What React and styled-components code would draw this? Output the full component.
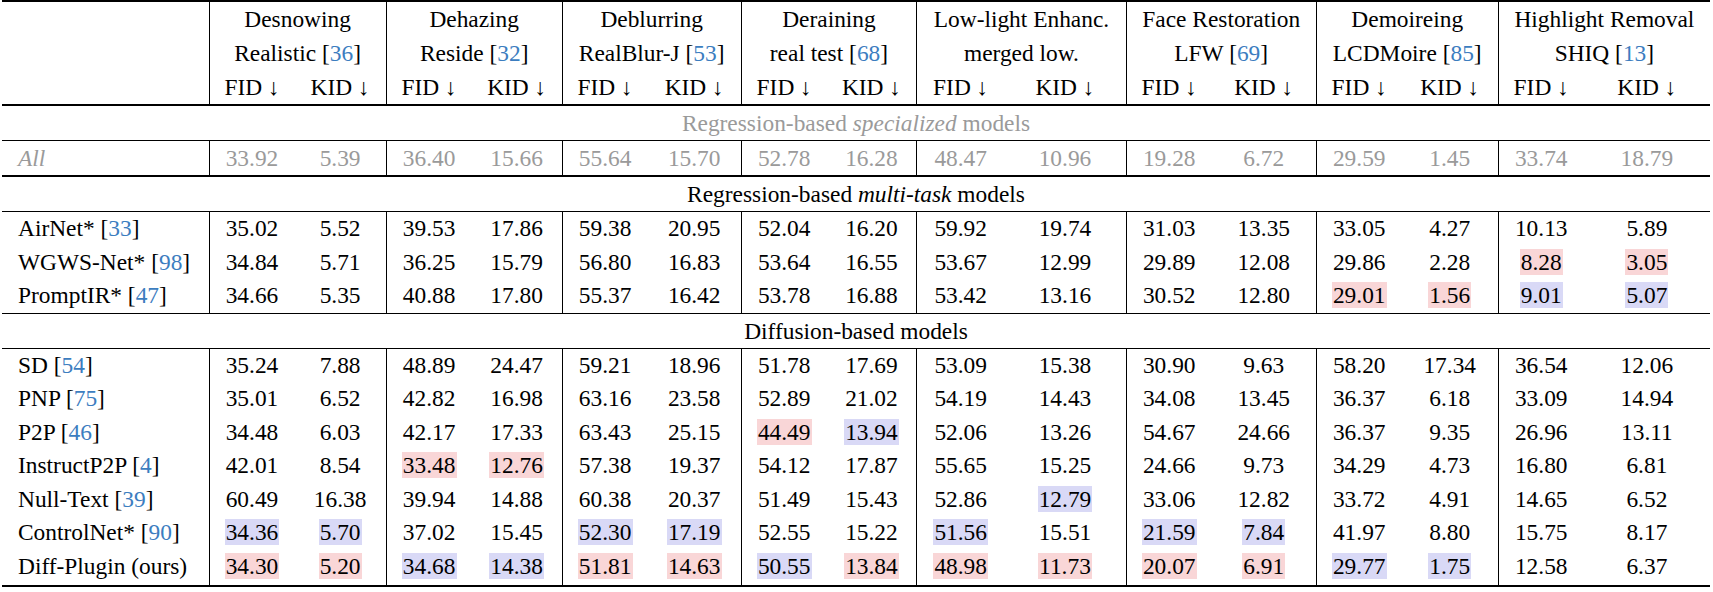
import React from "react"
import styled, { createGlobalStyle } from "styled-components"

const groups = [
	{ task: "Desnowing", set: "Realistic", cite: 36, fid: 86, kid: 91.2 },
	{ task: "Dehazing", set: "Reside", cite: 32, fid: 86, kid: 90 },
	{ task: "Deblurring", set: "RealBlur-J", cite: 53, fid: 86, kid: 93 },
	{ task: "Deraining", set: "real test", cite: 68, fid: 86, kid: 89.5 },
	{ task: "Low-light Enhanc.", set: "merged low.", fid: 88, kid: 121.5 },
	{ task: "Face Restoration", set: "LFW", cite: 69, fid: 86, kid: 104 },
	{ task: "Demoireing", set: "LCDMoire", cite: 85, fid: 86, kid: 96 },
	{ task: "Highlight Removal", set: "SHIQ", cite: 13, fid: 86, kid: 126.3 },
]

// suffix r = best (pink), b = second (blue)
const multiTask = [
	["AirNet*", 33, "35.02 5.52 39.53 17.86 59.38 20.95 52.04 16.20 59.92 19.74 31.03 13.35 33.05 4.27 10.13 5.89"],
	["WGWS-Net*", 98, "34.84 5.71 36.25 15.79 56.80 16.83 53.64 16.55 53.67 12.99 29.89 12.08 29.86 2.28 8.28r 3.05r"],
	["PromptIR*", 47, "34.66 5.35 40.88 17.80 55.37 16.42 53.78 16.88 53.42 13.16 30.52 12.80 29.01r 1.56r 9.01b 5.07b"],
]

const diffusion = [
	["SD", 54, "35.24 7.88 48.89 24.47 59.21 18.96 51.78 17.69 53.09 15.38 30.90 9.63 58.20 17.34 36.54 12.06"],
	["PNP", 75, "35.01 6.52 42.82 16.98 63.16 23.58 52.89 21.02 54.19 14.43 34.08 13.45 36.37 6.18 33.09 14.94"],
	["P2P", 46, "34.48 6.03 42.17 17.33 63.43 25.15 44.49r 13.94b 52.06 13.26 54.67 24.66 36.37 9.35 26.96 13.11"],
	["InstructP2P", 4, "42.01 8.54 33.48r 12.76r 57.38 19.37 54.12 17.87 55.65 15.25 24.66 9.73 34.29 4.73 16.80 6.81"],
	["Null-Text", 39, "60.49 16.38 39.94 14.88 60.38 20.37 51.49 15.43 52.86 12.79b 33.06 12.82 33.72 4.91 14.65 6.52"],
	["ControlNet*", 90, "34.36b 5.70b 37.02 15.45 52.30b 17.19b 52.55 15.22 51.56b 15.51 21.59b 7.84b 41.97 8.80 15.75 8.17"],
	["Diff-Plugin (ours)", null, "34.30r 5.20r 34.68b 14.38b 51.81r 14.63r 50.55b 13.84r 48.98r 11.73r 20.07r 6.91r 29.77b 1.75b 12.58 6.37"],
]

const specialized = "33.92 5.39 36.40 15.66 55.64 15.70 52.78 16.28 48.47 10.96 19.28 6.72 29.59 1.45 33.74 18.79"

const serif = `"Liberation Serif", "Times New Roman", serif`

function Values({ list, muted }) {
	return list.split(" ").map((raw, i) => {
		const tone = raw.match(/[rb]$/) ? raw.slice(-1) : null
		const value = tone ? raw.slice(0, -1) : raw
		return (
			<NumCell key={i} $sep={i % 2 === 0} $muted={muted}>
				{tone ? <Mark $tone={tone}>{value}</Mark> : value}
			</NumCell>
		)
	})
}

function ModelRows({ rows }) {
	return rows.map(([name, cite, list], i) => (
		<Row key={name} $h={33.5} $pad={i === rows.length - 1 && rows.length > 5 ? 2 : 0}>
			<LabelCell>
				{name}
				{cite !== null && (
					<>
						{" "}[<Cite>{cite}</Cite>]
					</>
				)}
			</LabelCell>
			<Values list={list} />
		</Row>
	))
}

function App() {
	return (
		<>
			<GlobalStyle />
			<Table>
				<colgroup>
					<Col $w={206.5} />
					{groups.map((g) => (
						<React.Fragment key={g.task}>
							<Col $w={g.fid} />
							<Col $w={g.kid} />
						</React.Fragment>
					))}
				</colgroup>
				<thead>
					<Row $top={2} $h={34}>
						<LabelHead rowSpan={3} />
						{groups.map((g) => (
							<HeadCell key={g.task} colSpan={2} $sep>
								{g.task}
							</HeadCell>
						))}
					</Row>
					<Row $h={34}>
						{groups.map((g) => (
							<HeadCell key={g.task} colSpan={2} $sep>
								{g.set}
								{g.cite && (
									<>
										{" "}[<Cite>{g.cite}</Cite>]
									</>
								)}
							</HeadCell>
						))}
					</Row>
					<Row $bottom={2} $h={34}>
						{groups.map((g) => (
							<React.Fragment key={g.task}>
								<HeadCell $sep>FID ↓</HeadCell>
								<HeadCell>KID ↓</HeadCell>
							</React.Fragment>
						))}
					</Row>
				</thead>
				<tbody>
					<Row $bottom={1} $h={34}>
						<SectionCell colSpan={17} $muted>
							Regression-based <em>specialized</em> models
						</SectionCell>
					</Row>
					<Row $bottom={2} $h={34}>
						<LabelCell $muted>
							<em>All</em>
						</LabelCell>
						<Values list={specialized} muted />
					</Row>
					<Row $bottom={1} $h={34}>
						<SectionCell colSpan={17}>
							Regression-based <em>multi-task</em> models
						</SectionCell>
					</Row>
				</tbody>
				<tbody>
					<ModelRows rows={multiTask} />
					<Row $top={1} $bottom={1} $h={34}>
						<SectionCell colSpan={17}>Diffusion-based models</SectionCell>
					</Row>
				</tbody>
				<BottomBody>
					<ModelRows rows={diffusion} />
				</BottomBody>
			</Table>
		</>
	)
}

export default App

const GlobalStyle = createGlobalStyle`
	html, body {
		margin: 0;
		padding: 0;
		background: #fff;
	}
	body {
		font-family: ${serif};
		color: #000;
	}
`

const Table = styled.table`
	margin-left: 2px;
	width: 1708px;
	table-layout: fixed;
	border-collapse: separate;
	border-spacing: 0;
	font-family: ${serif};
	font-size: 23.4px;
	color: #000;
	em {
		font-style: italic;
	}
`

const Col = styled.col`
	width: ${(p) => p.$w}px;
`

const Row = styled.tr`
	& > td,
	& > th {
		line-height: ${(p) => p.$h}px;
		border-top: ${(p) => p.$top || 0}px solid #000;
		border-bottom: ${(p) => p.$bottom || 0}px solid #000;
		padding-bottom: ${(p) => p.$pad || 0}px;
	}
`

const BottomBody = styled.tbody`
	& > tr:last-child > td {
		border-bottom: 2px solid #000;
	}
`

const LabelHead = styled.th`
	padding: 0;
	&& {
		border-bottom: 2px solid #000;
	}
`

const HeadCell = styled.th`
	font-weight: normal;
	text-align: center;
	white-space: nowrap;
	padding: 0;
	border-left: ${(p) => (p.$sep ? "1px solid #000" : "none")};
`

const LabelCell = styled.td`
	padding: 0 0 0 16px;
	text-align: left;
	white-space: nowrap;
	color: ${(p) => (p.$muted ? "#9a9a9a" : "#000")};
`

const NumCell = styled.td`
	padding: 0;
	text-align: center;
	white-space: nowrap;
	border-left: ${(p) => (p.$sep ? "1px solid #000" : "none")};
	color: ${(p) => (p.$muted ? "#9a9a9a" : "#000")};
`

const SectionCell = styled.td`
	padding: 0;
	text-align: center;
	white-space: nowrap;
	color: ${(p) => (p.$muted ? "#9a9a9a" : "#000")};
`

const Mark = styled.span`
	padding: 0 1px;
	background: ${(p) => (p.$tone === "r" ? "#f9d6d7" : "#d9d9f6")};
`

const Cite = styled.span`
	color: #3c7dbf;
`
